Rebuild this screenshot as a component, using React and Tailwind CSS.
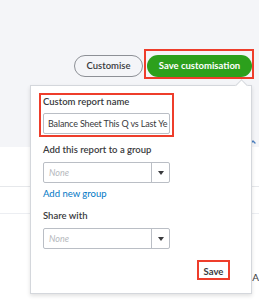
import { ChevronUp } from 'lucide-react'

function SelectBox() {
  return (
    <div className="flex h-[21px] w-[127px] items-stretch rounded-[2px] border border-[#babec5] bg-white">
      <div className="flex flex-1 items-center pl-[5px] text-[9px] italic text-[#b5b8bd]">None</div>
      <div className="flex w-[18px] items-center justify-center border-l border-[#babec5]">
        <span className="h-0 w-0 border-x-[3px] border-t-[4px] border-x-transparent border-t-[#393a3d]" />
      </div>
    </div>
  )
}

export default function App() {
  return (
    <div className="relative h-[300px] w-[259px] overflow-hidden bg-white font-['Lato',sans-serif] text-[#393a3d]">
      {/* Top toolbar */}
      <div className="flex h-[147px] flex-col bg-[#f4f5f8]">
        <div className="flex justify-end gap-[4px] pr-[7px] pt-[55px]">
          <button className="h-[22px] w-[69px] rounded-full border border-[#8d9096] text-[9.5px] font-semibold text-[#393a3d]">
            Customise
          </button>
          <button className="h-[22px] w-[105px] rounded-full bg-[#2ca01c] text-[9.5px] font-bold text-white">
            Save customisation
          </button>
        </div>
        <div className="mt-auto flex justify-end pb-[1px] pr-[2px]">
          <ChevronUp className="h-[8px] w-[8px] text-[#4a7fc1]" strokeWidth={4} />
        </div>
      </div>

      {/* Table rows behind */}
      <div className="h-[40px] border-b border-[#e6e8eb]" />
      <div className="h-[27px] border-b border-[#eceef2]" />
      <div className="flex justify-end pt-[56px] text-[10px] text-[#393a3d]">A</div>

      {/* Popover */}
      <div className="absolute left-[30px] top-[85px] h-[209px] w-[222px] border border-[#d4d7dc] bg-white pl-[12px] pt-[9px] shadow-[0_2px_4px_rgba(0,0,0,0.12)]">
        <div className="absolute right-[5px] top-[-5px] h-[9px] w-[9px] rotate-45 border-l border-t border-[#d4d7dc] bg-white" />
        <div className="text-[9.5px] font-semibold leading-[14px]">Custom report name</div>
        <div className="mt-[4px] flex h-[21px] w-[127px] items-center overflow-hidden whitespace-nowrap rounded-[2px] border border-[#babec5] pl-[4px] text-[9px] tracking-[-0.15px]">
          Balance Sheet This Q vs Last Ye
        </div>
        <div className="mt-[9px] text-[9.5px] font-semibold leading-[14px]">Add this report to a group</div>
        <div className="mt-[5px]">
          <SelectBox />
        </div>
        <div className="mt-[4px] text-[9.5px] leading-[14px] text-[#0077c5]">Add new group</div>
        <div className="mt-[8px] text-[9.5px] font-semibold leading-[14px]">Share with</div>
        <div className="mt-[5px]">
          <SelectBox />
        </div>
        <div className="mt-[13px] flex justify-end pr-[21px]">
          <button className="h-[20px] w-[33px] text-[9.5px] font-bold">Save</button>
        </div>
      </div>

      {/* Highlight annotations */}
      <div className="pointer-events-none absolute left-[144px] top-[49px] h-[30px] w-[110px] border-2 border-[#ee3d2b]" />
      <div className="pointer-events-none absolute left-[39px] top-[93px] h-[44px] w-[135px] border-2 border-[#ee3d2b]" />
      <div className="pointer-events-none absolute left-[197px] top-[260px] h-[20px] w-[33px] border-2 border-[#ee3d2b]" />
    </div>
  )
}
